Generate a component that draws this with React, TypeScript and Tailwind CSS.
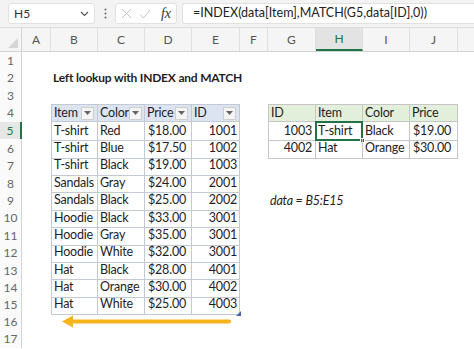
import React from 'react';

// sheet column tracks: row header, A..J, K (rest)
const gridCols = 'grid grid-cols-[22px_29px_47px_47px_47px_48px_28px_48px_47px_47px_48px_1fr]';

const table1 = [
  ['T-shirt', 'Red', '$18.00', '1001'],
  ['T-shirt', 'Blue', '$17.50', '1002'],
  ['T-shirt', 'Black', '$19.00', '1003'],
  ['Sandals', 'Gray', '$24.00', '2001'],
  ['Sandals', 'Black', '$25.00', '2002'],
  ['Hoodie', 'Black', '$33.00', '3001'],
  ['Hoodie', 'Gray', '$35.00', '3001'],
  ['Hoodie', 'White', '$32.00', '3001'],
  ['Hat', 'Black', '$28.00', '4001'],
  ['Hat', 'Orange', '$30.00', '4002'],
  ['Hat', 'White', '$25.00', '4003'],
];

const table2 = [
  ['1003', 'T-shirt', 'Black', '$19.00'],
  ['4002', 'Hat', 'Orange', '$30.00'],
];

const colLetters = ['A', 'B', 'C', 'D', 'E', 'F', 'G', 'H', 'I', 'J'];

const FilterButton = () => (
  <span className="ml-auto mr-[1px] flex h-[13px] w-[13px] shrink-0 items-center justify-center border border-[#cfcfcf] bg-[#f4f4f4]">
    <svg width="7" height="4" viewBox="0 0 7 4">
      <path d="M0 0h7L3.5 4z" fill="#666" />
    </svg>
  </span>
);

const RowHeader = ({ n, active }: { n: number; active?: boolean }) => (
  <div
    className={`flex items-center justify-center border-r border-[#d4d4d4] text-[12px] tracking-normal ${
      active ? 'bg-[#e6e6e6] text-[#217346] border-r-2 border-r-[#217346]' : 'bg-[#fafafa] text-[#666]'
    }`}
  >
    {n}
  </div>
);

const t1Base = 'flex items-center border-r border-b border-[#c3cad6] px-[2px] whitespace-nowrap overflow-hidden';
const t2Base = 'flex items-center border-r border-b border-[#c6c6c6] px-[2px] whitespace-nowrap overflow-hidden';

export default function App() {
  const rows: React.ReactNode[] = [];

  for (let r = 1; r <= 17; r++) {
    const cells: React.ReactNode[] = [];

    if (r === 2) {
      cells.push(
        <div key="t" className="col-start-3 col-span-9 flex items-center whitespace-nowrap font-bold text-[12px] px-[2px]">
          Left lookup with INDEX and MATCH
        </div>
      );
    }

    if (r === 4) {
      ['Item', 'Color', 'Price', 'ID'].forEach((h, i) => {
        cells.push(
          <div
            key={'h1' + i}
            className={`${t1Base} border-t bg-[#dce4f1] ${i === 0 ? 'col-start-3 border-l' : ''}`}
          >
            <span>{h}</span>
            <FilterButton />
          </div>
        );
      });
      ['ID', 'Item', 'Color', 'Price'].forEach((h, i) => {
        cells.push(
          <div
            key={'h2' + i}
            className={`${t2Base} border-t bg-[#e2efda] ${i === 0 ? 'col-start-8 border-l' : ''}`}
          >
            {h}
          </div>
        );
      });
    }

    if (r >= 5 && r <= 15) {
      const d = table1[r - 5];
      cells.push(<div key="b" className={`${t1Base} col-start-3 border-l`}>{d[0]}</div>);
      cells.push(<div key="c" className={t1Base}>{d[1]}</div>);
      cells.push(<div key="d" className={`${t1Base} justify-end pr-[5px]`}>{d[2]}</div>);
      cells.push(
        <div key="e" className={`${t1Base} justify-end relative overflow-visible`}>
          {d[3]}
          {r === 15 && (
            <svg className="absolute right-[-2px] bottom-[-2px]" width="5" height="5" viewBox="0 0 5 5">
              <path d="M5 0V5H0z" fill="#4a64a8" />
            </svg>
          )}
        </div>
      );
    }

    if (r === 5 || r === 6) {
      const d = table2[r - 5];
      cells.push(<div key="g" className={`${t2Base} col-start-8 border-l justify-end pr-[3px]`}>{d[0]}</div>);
      cells.push(
        <div key="h" className={`${t2Base} relative overflow-visible`}>
          {d[1]}
          {r === 5 && (
            <span className="absolute left-[-1px] top-[-1px] right-[-1px] bottom-[-1px] border-2 border-[#217346]">
              <span className="absolute right-[-4px] bottom-[-4px] h-[5px] w-[5px] bg-[#217346] border border-white" />
            </span>
          )}
        </div>
      );
      cells.push(<div key="i" className={t2Base}>{d[2]}</div>);
      cells.push(<div key="j" className={`${t2Base} justify-end pr-[6px]`}>{d[3]}</div>);
    }

    if (r === 9) {
      cells.push(
        <div key="lbl" className="col-start-8 col-span-3 flex items-center px-[2px] italic whitespace-nowrap">
          data = B5:E15
        </div>
      );
    }

    if (r === 16) {
      cells.push(
        <div key="arrow" className="col-start-3 col-span-4 flex items-center">
          <svg width="189" height="17" viewBox="0 0 189 17">
            <path d="M20 8.5H178" stroke="#f6b41c" strokeWidth="4" strokeLinecap="round" />
            <path d="M11 8.5L22 2.5V14.5z" fill="#f6b41c" />
          </svg>
        </div>
      );
    }

    rows.push(
      <div key={r} className={`${gridCols} h-[17.4px]`}>
        <RowHeader n={r} active={r === 5} />
        {cells}
      </div>
    );
  }

  return (
    <div
      className="w-[474px] h-[349px] overflow-hidden bg-white text-[12.5px] tracking-[-0.2px] text-[#1e1e1e]"
      style={{ fontFamily: "Lato, 'Open Sans', sans-serif" }}
    >
      {/* formula bar */}
      <div className="h-[28px] bg-[#f3f3f3] border-b border-[#dcdcdc] flex items-center pl-[8px] tracking-normal">
        <div className="h-[21px] w-[87px] bg-white border border-[#e1e1e1] rounded-[3px] flex items-center px-[5px] text-[12px] text-[#333]">
          <span>H5</span>
          <svg className="ml-auto" width="9" height="6" viewBox="0 0 9 6">
            <path d="M1 1l3.5 3.5L8 1" stroke="#555" strokeWidth="1.2" fill="none" />
          </svg>
        </div>
        <div className="w-[20px] flex justify-center">
          <svg width="3" height="11" viewBox="0 0 3 11">
            <circle cx="1.5" cy="1.5" r="1" fill="#666" />
            <circle cx="1.5" cy="5.5" r="1" fill="#666" />
            <circle cx="1.5" cy="9.5" r="1" fill="#666" />
          </svg>
        </div>
        <div className="h-[21px] w-[62px] bg-white border border-[#e1e1e1] rounded-[3px] flex items-center px-[5px] gap-[7px]">
          <svg width="11" height="11" viewBox="0 0 11 11">
            <path d="M1 1l9 9M10 1l-9 9" stroke="#c4c4c4" strokeWidth="1" />
          </svg>
          <svg width="12" height="10" viewBox="0 0 12 10">
            <path d="M1 5.5l3.5 3.5L11 1" stroke="#c4c4c4" strokeWidth="1" fill="none" />
          </svg>
          <span
            className="ml-auto italic text-[14px] text-[#333] leading-none"
            style={{ fontFamily: "'Liberation Serif', serif" }}
          >
            fx
          </span>
        </div>
        <div className="ml-[5px] h-[21px] flex-1 bg-white border border-[#e1e1e1] border-r-0 rounded-l-[3px] flex items-center pl-[10px] text-[12.5px] text-[#222] whitespace-nowrap overflow-hidden">
          =INDEX(data[Item],MATCH(G5,data[ID],0))
        </div>
      </div>

      {/* column headers */}
      <div className={`${gridCols} h-[24px] bg-[#f5f5f5] border-b border-[#d4d4d4] text-[12px] text-[#555] tracking-normal`}>
        <div className="relative border-r border-[#d4d4d4]">
          <svg className="absolute right-[3px] bottom-[3px]" width="10" height="10" viewBox="0 0 10 10">
            <path d="M10 0V10H0z" fill="#d6d6d6" />
          </svg>
        </div>
        {colLetters.map((c) => (
          <div
            key={c}
            className={`flex items-center justify-center border-r border-[#e0e0e0] ${
              c === 'H' ? 'bg-[#e3e3e3] text-[#217346] border-b-2 border-b-[#217346]' : ''
            }`}
          >
            {c}
          </div>
        ))}
        <div />
      </div>

      {rows}
    </div>
  );
}
